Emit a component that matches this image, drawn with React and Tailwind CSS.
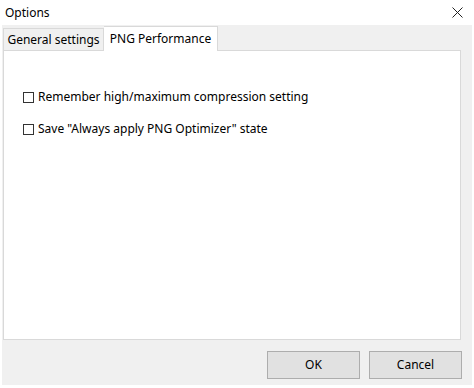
import React, { useState } from 'react';

const Checkbox = ({ label, checked, onChange }) => (
  <label className="flex items-center h-[16px] cursor-default">
    <span
      onClick={onChange}
      className="w-[11px] h-[11px] border border-[#333] bg-white mr-[4px] shrink-0"
    />
    <span>{label}</span>
  </label>
);

const App = () => {
  const [tab, setTab] = useState('png');
  const [remember, setRemember] = useState(false);
  const [saveState, setSaveState] = useState(false);

  return (
    <div
      className="w-[474px] h-[388px] bg-white text-[12px] text-black overflow-hidden flex flex-col"
      style={{ fontFamily: '"Noto Sans", "Open Sans", sans-serif' }}
    >
      {/* title bar */}
      <div className="h-[25px] flex items-center justify-between pl-[5px] pr-[11px] shrink-0">
        <span className="leading-none">Options</span>
        <svg width="11" height="11" viewBox="0 0 11 11" className="text-[#222]">
          <path d="M0.5 0.5 L10.5 10.5 M10.5 0.5 L0.5 10.5" stroke="currentColor" strokeWidth="1" />
        </svg>
      </div>

      <div className="flex-1 bg-[#f0f0f0] ml-[2px] mr-[2px] mb-[3px] flex flex-col">
        {/* tabs */}
        <div className="flex items-end h-[25px] pl-[1px] shrink-0">
          <button
            onClick={() => setTab('general')}
            className="w-[101px] h-[22px] bg-[#f0f0f0] border border-b-0 border-[#d9d9d9] leading-none flex items-center justify-center"
          >
            General settings
          </button>
          <button
            onClick={() => setTab('png')}
            className="w-[114px] h-[25px] bg-white border border-b-0 border-l-0 border-[#d9d9d9] leading-none flex items-center justify-center -mb-px relative z-10"
          >
            PNG Performance
          </button>
        </div>

        {/* panel */}
        <div className="h-[290px] ml-[1px] mr-[11px] bg-white border border-[#d9d9d9] pl-[19px] pt-[38px] flex flex-col gap-[16px]">
          <Checkbox
            label="Remember high/maximum compression setting"
            checked={remember}
            onChange={() => setRemember(!remember)}
          />
          <Checkbox
            label={'Save "Always apply PNG Optimizer" state'}
            checked={saveState}
            onChange={() => setSaveState(!saveState)}
          />
        </div>

        {/* buttons */}
        <div className="flex justify-end gap-[9px] pt-[11px] pr-[10px]">
          <button className="w-[93px] h-[28px] bg-[#e1e1e1] border border-[#adadad]">OK</button>
          <button className="w-[93px] h-[28px] bg-[#e1e1e1] border border-[#adadad]">Cancel</button>
        </div>
      </div>
    </div>
  );
};

export default App;
